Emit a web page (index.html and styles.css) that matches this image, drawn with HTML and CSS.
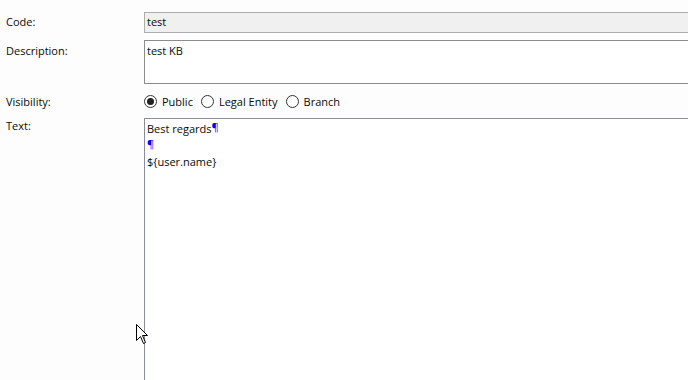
FILE: index.html
```html
<!DOCTYPE html>
<html lang="en">
<head>
    <meta charset="UTF-8">
    <title>Template</title>
    <link rel="stylesheet" href="styles.css">
</head>
<body>
    <div class="form">
        <div class="form-label">Code:</div>
        <div class="field field-readonly">test</div>

        <div class="form-label label-desc">Description:</div>
        <div class="field field-desc">test KB</div>

        <div class="form-label label-vis">Visibility:</div>
        <div class="radio-group">
            <span class="radio"><span class="radio-circle checked"></span>Public</span>
            <span class="radio"><span class="radio-circle"></span>Legal Entity</span>
            <span class="radio"><span class="radio-circle"></span>Branch</span>
        </div>

        <div class="form-label label-text">Text:</div>
        <div class="field field-text">
            <div>Best regards<span class="pilcrow">&para;</span></div>
            <div><span class="pilcrow">&para;</span></div>
            <div>${user.name}</div>
        </div>
    </div>

    <svg class="cursor" width="13" height="21" viewBox="0 0 13 21">
        <path d="M0.5 0.5 L0.5 16.5 L4.5 12.5 L7.5 19.5 L9.5 18.5 L6.5 11.5 L11.5 11.5 Z" fill="#fff" stroke="#000" stroke-width="1"/>
    </svg>
</body>
</html>
```

FILE: styles.css
```css
body {
    margin: 0;
    padding: 0;
    background-color: #fdfdfd;
    font-family: "Open Sans", "Noto Sans", sans-serif;
    font-size: 11px;
    line-height: 16px;
    color: #0a0a0a;
    overflow: hidden;
    height: 380px;
}
.form {
    display: grid;
    grid-template-columns: 144px 560px;
    padding-top: 12px;
}
.form-label {
    padding-left: 6px;
    padding-top: 2px;
}
.label-desc {
    margin-top: 7px;
    padding-top: 3px;
}
.label-vis {
    margin-top: 8px;
    padding-top: 2px;
}
.label-text {
    margin-top: 6px;
    padding-top: 1px;
}
.field {
    border: 1px solid #9a9a9a;
    background-color: #fff;
    padding: 2px 2px 1px;
}
.field-readonly {
    background-color: #f0f0f0;
    border-color: #adadad;
    padding: 1px 2px 2px;
}
.field-desc {
    margin-top: 7px;
    height: 40px;
    padding-bottom: 0;
    border-color: #8c8c8c;
}
.radio-group {
    display: flex;
    align-items: center;
    gap: 8px;
    margin-top: 8px;
    height: 19px;
}
.radio {
    display: flex;
    align-items: center;
    gap: 5px;
}
.radio-circle {
    width: 11px;
    height: 11px;
    border: 1px solid #333;
    border-radius: 50%;
    background-color: #fff;
    position: relative;
}
.radio-circle.checked::after {
    content: "";
    position: absolute;
    left: 2px;
    top: 2px;
    width: 7px;
    height: 7px;
    border-radius: 50%;
    background-color: #222;
}
.field-text {
    margin-top: 7px;
    height: 259px;
    padding-top: 2px;
    padding-bottom: 0;
    line-height: 16.5px;
    border-color: #8b8d98;
    border-right: none;
    border-bottom: none;
}
.pilcrow {
    color: #0000ff;
    vertical-align: 2px;
    font-size: 11px;
    line-height: 0;
}
.cursor {
    position: absolute;
    left: 136px;
    top: 324px;
}
```
